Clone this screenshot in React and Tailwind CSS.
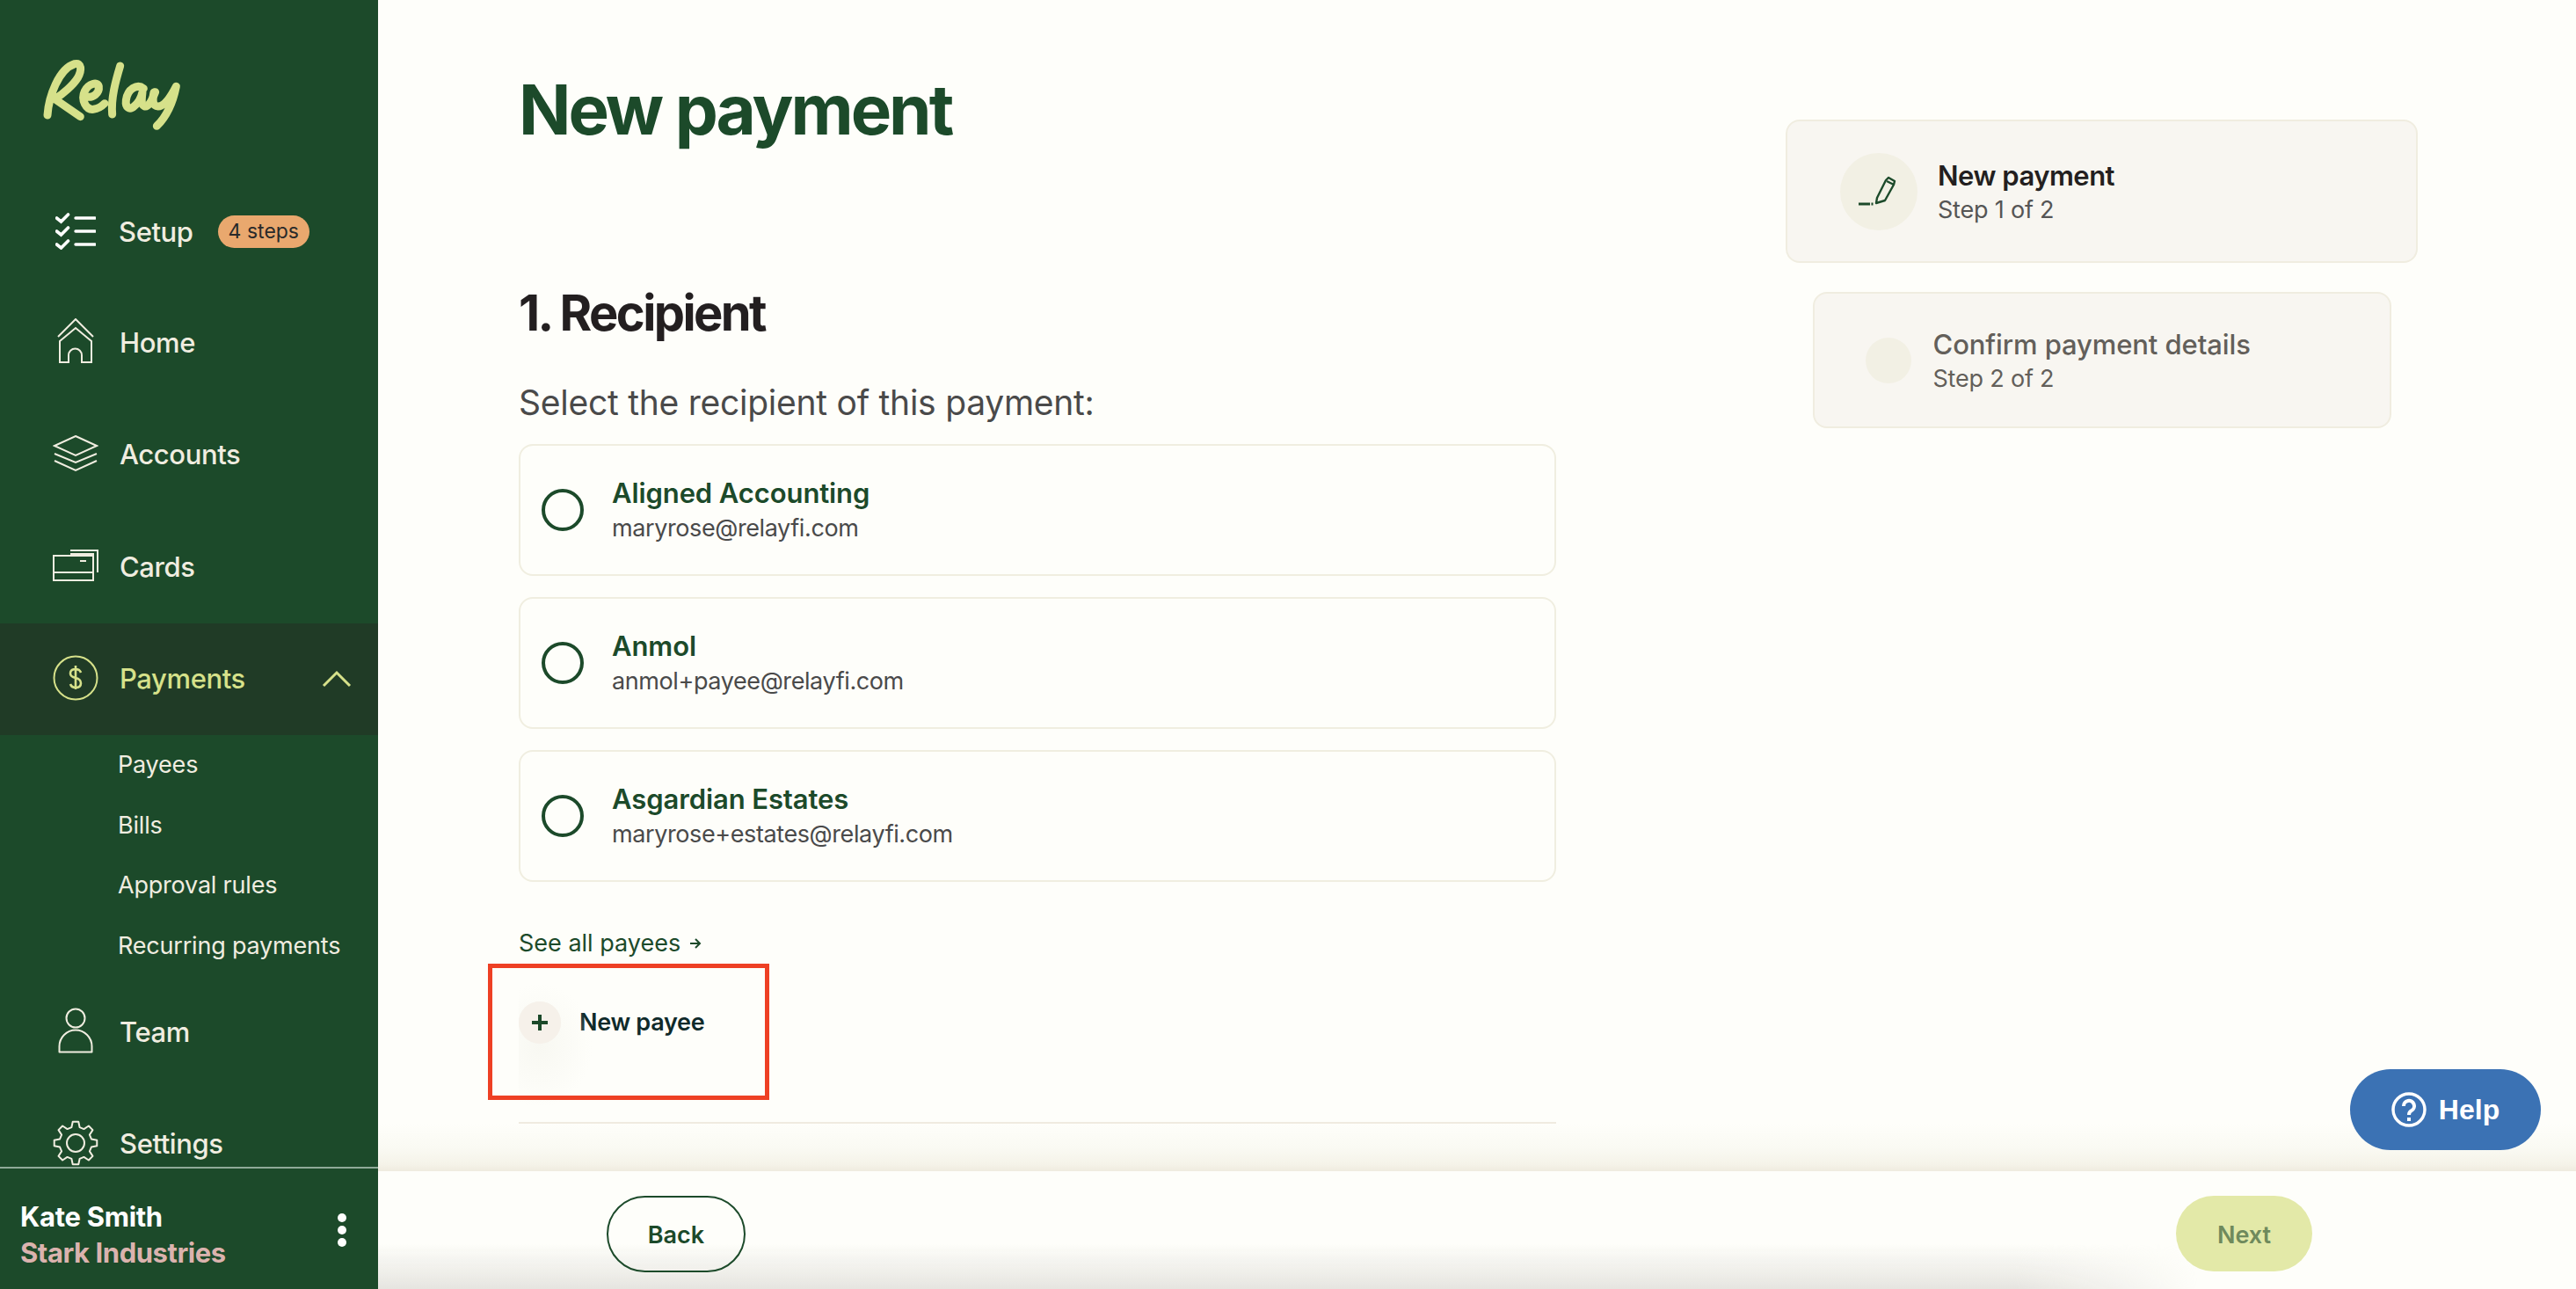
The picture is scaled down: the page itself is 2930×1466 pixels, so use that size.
import React from "react";

const Cream = "#f0ede0";

function CheckList() {
  return (
    <svg width="46" height="42" viewBox="0 0 46 42" fill="none" stroke="#fff" strokeLinecap="round">
      <path d="M1.5 6l5 4 8-8M1.5 21l5 4 8-8M1.5 36l5 4 8-8" strokeWidth="3.6" />
      <path d="M23 6h22M23 21h22M23 36h22" strokeWidth="3.4" />
    </svg>
  );
}
function HomeIcon() {
  return (
    <svg width="42" height="52" viewBox="0 0 42 52" fill="none" stroke={Cream} strokeWidth="2">
      <path d="M1 21L21 1l20 20" />
      <path d="M3 50V26L21 11l18 15v24H28V42a7.5 7.5 0 0 0-15 0v8z" />
    </svg>
  );
}
function Layers() {
  return (
    <svg width="52" height="42" viewBox="0 0 52 42" fill="none" stroke={Cream} strokeWidth="2">
      <path d="M26 1l24 11-24 11L2 12z" />
      <path d="M2 21l24 10 24-10M2 29l24 11 24-11" />
    </svg>
  );
}
function CardsIcon() {
  return (
    <svg width="52" height="36" viewBox="0 0 52 36" fill="none" stroke={Cream} strokeWidth="2">
      <rect x="1" y="7" width="45" height="28" />
      <path d="M1 26h45M31 13h7M20 1h31v25M20 5h27" />
    </svg>
  );
}
function Dollar() {
  return (
    <svg width="52" height="52" viewBox="0 0 52 52" fill="none" stroke="#d6e18a" strokeWidth="2">
      <circle cx="26" cy="26" r="24.5" />
      <path d="M32 20c-1-3-3-4-6-4-4 0-6 2-6 5s2 4 6 5 6 3 6 6-2 5-6 5c-3 0-5-1-6-4M26 12v27" strokeWidth="2.6" />
    </svg>
  );
}
function Person() {
  return (
    <svg width="40" height="52" viewBox="0 0 40 52" fill="none" stroke={Cream} strokeWidth="2">
      <circle cx="20" cy="12" r="10.5" />
      <path d="M1.5 50.5V44a18.5 18.5 0 0 1 37 0v6.500z" strokeLinejoin="round" />
    </svg>
  );
}
function gearPath() {
  const teeth = 8, cx = 26, cy = 26, ro = 24.5, ri = 18.5;
  let d = "";
  for (let i = 0; i < teeth; i++) {
    const a = (i / teeth) * Math.PI * 2 - Math.PI / 2;
    const step = (Math.PI * 2) / teeth;
    const pts = [
      [ri, a - step * 0.32],
      [ro, a - step * 0.17],
      [ro, a + step * 0.17],
      [ri, a + step * 0.32],
    ];
    pts.forEach(([r, t], j) => {
      const x = (cx + r * Math.cos(t)).toFixed(2);
      const y = (cy + r * Math.sin(t)).toFixed(2);
      d += (i === 0 && j === 0 ? "M" : "L") + x + " " + y + " ";
    });
  }
  return d + "Z";
}
function Gear() {
  return (
    <svg width="52" height="52" viewBox="0 0 52 52" fill="none" stroke={Cream} strokeWidth="2" strokeLinejoin="round">
      <circle cx="26" cy="26" r="10" />
      <path d={gearPath()} />
    </svg>
  );
}
function Logo() {
  return (
    <svg width="200" height="110" viewBox="0 0 600 330" fill="none" stroke="#d6e18a" strokeLinecap="round" strokeLinejoin="round" strokeWidth="27" className="block">
      <path d="M72 243C76 180 110 85 165 68c24-6 25 22 10 48-15 24-50 55-78 72l87 60" />
      <path d="M205 180c22 5 45-12 42-35-3-18-35-10-48 16-14 30 5 65 30 62 15-2 28-10 38-20" />
      <path d="M320 75c-15 50-32 110-27 165" />
      <path d="M400 152c-22-18-55 2-60 40-3 25 12 35 28 20 15-12 24-30 28-48-2 18-5 42 6 48 14 5 26-18 38-48" />
      <path d="M435 165c-6 25-4 48 14 48 22 0 45-35 62-68-10 50-30 100-66 135" />
    </svg>
  );
}

function NavItem({ icon, label, active }) {
  return (
    <div className={`flex items-center h-[127.5px] shrink-0 ${active ? "bg-[#203b26]" : ""}`}>
      <div className="w-[136px] flex justify-center pl-[36px] -mt-[3px]">{icon}</div>
      <span className={`text-[31px] font-medium tracking-[-0.4px] ${active ? "text-[#d6e18a]" : "text-[#f0ede0]"}`}>{label}</span>
      {active && (
        <svg className="ml-auto mr-[30px]" width="34" height="20" viewBox="0 0 34 20" fill="none" stroke="#d6e18a" strokeWidth="3"><path d="M2 18L17 3l15 15" /></svg>
      )}
    </div>
  );
}

function Recipient({ name, email }) {
  return (
    <div className="h-[150px] rounded-[16px] border-2 border-[#f0eee0] flex items-center pl-[24px] gap-[32px]">
      <div className="w-[48px] h-[48px] rounded-full border-[4px] border-[#1c4a2a]" />
      <div>
        <div className="text-[31px] leading-[42px] font-semibold tracking-[-0.1px] text-[#1c4a2a]">{name}</div>
        <div className="text-[27px] leading-[38px] text-[#4a4a4a] tracking-[-0.4px]">{email}</div>
      </div>
    </div>
  );
}

export default function App() {
  return (
    <div className="w-[2930px] h-[1466px] flex overflow-hidden bg-[#fefefa] font-['Inter',sans-serif]">
      <aside className="w-[430px] h-full flex flex-col bg-[#1c4a2a] shrink-0">
        <div className="flex-1 min-h-0 overflow-hidden">
          <div className="pt-[50px] pl-[30px] h-[200px]"><Logo /></div>
          <div>
            <div className="flex items-center h-[126px]">
              <div className="w-[136px] flex justify-center pl-[36px]"><CheckList /></div>
              <span className="mt-[3px] -ml-[1px] text-[31px] font-medium tracking-[-0.4px] text-[#f0ede0]">Setup</span>
              <span className="ml-[28px] h-[37px] px-[12px] rounded-full bg-[#e9a86e] text-[#2a2a2a] text-[23px] flex items-center">4 steps</span>
            </div>
            <NavItem icon={<HomeIcon />} label="Home" />
            <NavItem icon={<Layers />} label="Accounts" />
            <NavItem icon={<CardsIcon />} label="Cards" />
            <NavItem icon={<Dollar />} label="Payments" active />
            <div className="pl-[134px] text-[27px] text-[#f0ede0] tracking-[-0.2px]">
              <div className="h-[68.5px] flex items-center">Payees</div>
              <div className="h-[68.5px] flex items-center">Bills</div>
              <div className="h-[68.5px] flex items-center">Approval rules</div>
              <div className="h-[68.5px] flex items-center">Recurring payments</div>
            </div>
            <NavItem icon={<Person />} label="Team" />
            <NavItem icon={<Gear />} label="Settings" />
          </div>
        </div>
        <div className="h-[139px] shrink-0 border-t-2 border-[#8faa98] flex items-center pl-[23px] pr-[36px] justify-between">
          <div className="mt-[12px]">
            <div className="text-[31px] leading-[41px] font-bold text-white tracking-[-0.3px]">Kate Smith</div>
            <div className="text-[31px] leading-[41px] font-bold text-[#dbb3ae] tracking-[-0.45px]">Stark Industries</div>
          </div>
          <div className="flex flex-col gap-[4px] mt-[2px]">
            <div className="w-[10px] h-[10px] rounded-full bg-white" />
            <div className="w-[10px] h-[10px] rounded-full bg-white" />
            <div className="w-[10px] h-[10px] rounded-full bg-white" />
          </div>
        </div>
      </aside>

      <main className="relative flex-1 flex flex-col min-w-0">
        <div className="relative flex-1 min-h-0 overflow-hidden flex pl-[160px]">
          <div className="w-[1180px] shrink-0 pt-[77px]">
            <h1 className="text-[78px] leading-[96px] font-bold text-[#1c4a2a] tracking-[-3px]">New payment</h1>
            <h2 className="mt-[147px] text-[56px] leading-[72px] font-bold text-[#231f20] tracking-[-2.6px]">1. Recipient</h2>
            <p className="mt-[41px] text-[39px] leading-[50px] text-[#4a4a4a] tracking-[-0.25px]">Select the recipient of this payment:</p>
            <div className="mt-[22px] flex flex-col gap-[24px]">
              <Recipient name="Aligned Accounting" email="maryrose@relayfi.com" />
              <Recipient name="Anmol" email="anmol+payee@relayfi.com" />
              <Recipient name="Asgardian Estates" email="maryrose+estates@relayfi.com" />
            </div>
            <div className="mt-[50px] text-[27px] leading-[40px] text-[#1c4a2a] flex items-center gap-[10px]">
              See all payees
              <svg width="14" height="14" viewBox="0 0 14 14" fill="none" stroke="#1c4a2a" strokeWidth="2"><path d="M1 7h11M7 2l5 5-5 5" /></svg>
            </div>
            <div className="mt-[46px] flex items-center gap-[21px]">
              <div className="relative w-[48px] h-[48px] rounded-full bg-[#f6f1ea] flex items-center justify-center">
                <div className="absolute left-0 -top-[20px] w-[100px] h-[140px] bg-[radial-gradient(ellipse_60px_70px_at_24px_70px,#f8f8f2,transparent)]" />
                <div className="absolute inset-0 rounded-full bg-[#f6f1ea]" />
                <svg className="relative" width="20" height="20" viewBox="0 0 20 20" fill="none" stroke="#1c4a2a" strokeWidth="4"><path d="M10 1v18M1 10h18" /></svg>
              </div>
              <span className="text-[27px] font-semibold text-[#0f2a2a] tracking-[-0.3px]">New payee</span>
            </div>
            <div className="mt-[89px] h-[2px] bg-[#f0ebe0]" />
          </div>
          <div className="ml-[261px] w-[719px] shrink-0 pt-[136px] flex flex-col items-center gap-[33px]">
            <div className="w-[719px] h-[163px] rounded-[16px] border-2 border-[#f0ede0] bg-[#f8f6f1] flex items-center pl-[60px] gap-[23px]">
              <div className="w-[88px] h-[88px] rounded-full bg-[#f2f0e4] flex items-center justify-center">
                <svg width="60" height="50" viewBox="0 0 60 50" fill="none" stroke="#1c4a2a" strokeWidth="2.4" strokeLinejoin="round">
                  <path d="M27 38l1-6L38 12l3-3 7 4-1 4-10 18z" /><path d="M39 13l8 4" />
                  <path d="M7 39h13M21.500 39h2" strokeWidth="2.800" />
                </svg>
              </div>
              <div>
                <div className="text-[31px] leading-[42px] font-semibold text-[#231f20] tracking-[-0.5px]">New payment</div>
                <div className="text-[27px] leading-[36px] text-[#555] tracking-[-0.2px]">Step 1 of 2</div>
              </div>
            </div>
            <div className="w-[658px] h-[155px] rounded-[16px] border-2 border-[#f0ede0] bg-[#f8f6f1] flex items-center pl-[58px] gap-[25px]">
              <div className="w-[52px] h-[52px] rounded-full bg-[#f2f0e4]" />
              <div>
                <div className="text-[31px] leading-[42px] font-medium text-[#635f5a] tracking-[-0.1px]">Confirm payment details</div>
                <div className="text-[27px] leading-[36px] text-[#635f5a] tracking-[-0.2px]">Step 2 of 2</div>
              </div>
            </div>
          </div>
          <div className="absolute left-0 right-0 bottom-0 h-[54px] bg-[linear-gradient(to_top,#efebdf_0%,#f5f3e9_15%,#fafaf3_50%,transparent_100%)]" />
        </div>
        <div className="relative h-[134px] shrink-0 flex items-center justify-between pt-[8px] pl-[260px] pr-[300px] bg-[#fefefa]">
          <div className="absolute left-0 bottom-0 w-[2070px] h-[52px] bg-[linear-gradient(to_top,#e6e5e0,transparent)] [mask-image:linear-gradient(to_right,black_90%,transparent)]" />
          <button className="relative w-[158px] h-[87px] pt-[4px] rounded-full border-2 border-[#1c4a2a] text-[#1c4a2a] text-[27px] font-semibold">Back</button>
          <button className="relative w-[155px] h-[86px] pt-[4px] rounded-full bg-[#e3e9a8] text-[#6f8a5c] text-[27px] font-semibold">Next</button>
        </div>
        <div className="absolute left-[125px] top-[1096px] w-[320px] h-[155px] border-[5px] border-[#ee4024]" />
        <div className="absolute left-[2243px] top-[1216px] w-[217px] h-[92px] rounded-full bg-[#3b72b4] flex items-center justify-center gap-[14px]">
          <svg width="40" height="40" viewBox="0 0 40 40" fill="none" stroke="#fff" strokeWidth="3.5">
            <circle cx="20" cy="20" r="18" />
            <path d="M14 16a6 6 0 1 1 9 5c-2 1-3 2-3 5" strokeWidth="4" />
            <path d="M20 29v4" strokeWidth="4" />
          </svg>
          <span className="text-white text-[32px] font-bold font-['Liberation_Sans',sans-serif]">Help</span>
        </div>
      </main>
    </div>
  );
}
